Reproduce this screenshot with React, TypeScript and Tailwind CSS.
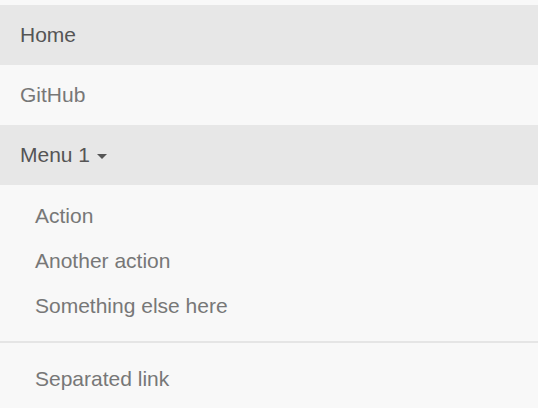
import React from "react";

export default function App() {
  const font = { fontFamily: '"Liberation Sans", Arial, sans-serif' };
  return (
    <div className="w-[538px] h-[408px] bg-[#f8f8f8] overflow-hidden" style={font}>
      <div className="pt-[5px]">
        <ul className="flex flex-col text-[21px] leading-[30px]">
          <li>
            <a className="block h-[60px] pl-[20px] py-[15px] bg-[#e7e7e7] text-[#555555]">Home</a>
          </li>
          <li>
            <a className="block h-[60px] pl-[20px] py-[15px] text-[#777777]">GitHub</a>
          </li>
          <li>
            <a className="flex items-center h-[60px] pl-[20px] py-[15px] bg-[#e7e7e7] text-[#555555]">
              <span>Menu 1</span>
              <span className="ml-[7px] mt-[2px] w-0 h-0 border-l-[5px] border-r-[5px] border-t-[5px] border-l-transparent border-r-transparent border-t-[#555555]" />
            </a>
            <ul className="pt-[8px] flex flex-col text-[#777777]">
              <li className="h-[45px] pl-[35px] flex items-center">Action</li>
              <li className="h-[45px] pl-[35px] flex items-center">Another action</li>
              <li className="h-[45px] pl-[35px] flex items-center">Something else here</li>
              <li className="h-[2px] mt-[13px] mb-[13.5px] bg-[#e5e5e5]" />
              <li className="h-[45px] pl-[35px] flex items-center">Separated link</li>
            </ul>
          </li>
        </ul>
      </div>
    </div>
  );
}
